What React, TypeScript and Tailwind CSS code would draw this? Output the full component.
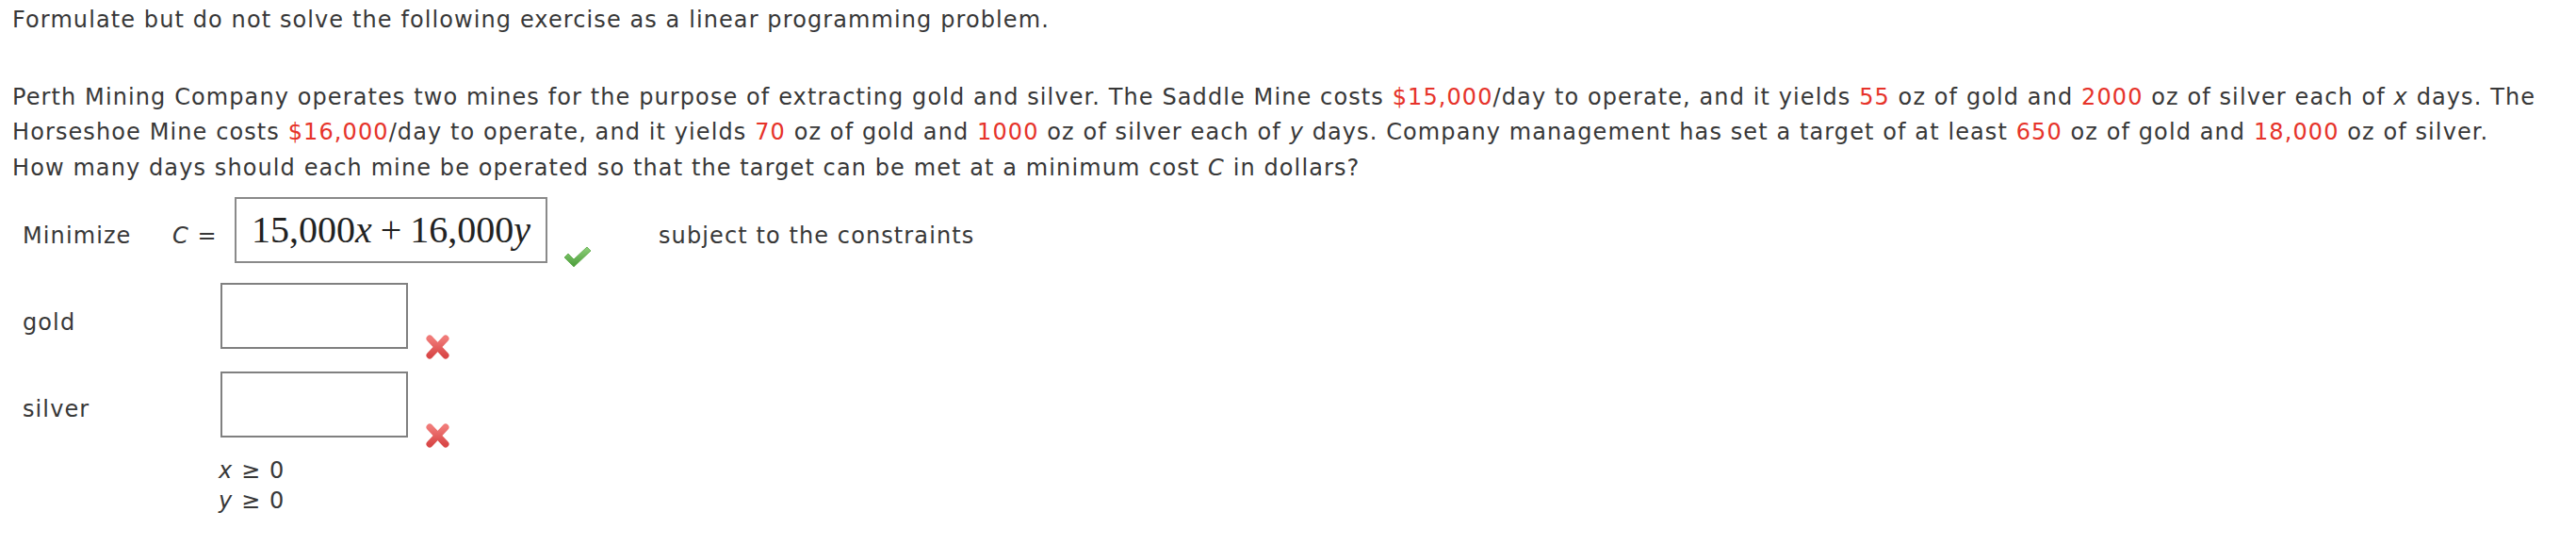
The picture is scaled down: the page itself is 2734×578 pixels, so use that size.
import React from 'react'

const Red = ({ children }: { children: React.ReactNode }) => <span className="text-[#e6332a]">{children}</span>

function CheckMark() {
  return (
    <svg width="30" height="23" viewBox="0 0 30 23">
      <defs>
        <linearGradient id="chk" x1="0" y1="0" x2="0" y2="1">
          <stop offset="0" stopColor="#8fd07a" />
          <stop offset="1" stopColor="#4a9c3a" />
        </linearGradient>
      </defs>
      <path d="M1 12 L5 8 L11 14 L25 1 L29 5 L11 22 Z" fill="url(#chk)" stroke="#5aa845" strokeWidth="0.8" strokeLinejoin="round" />
    </svg>
  )
}

function CrossMark() {
  return (
    <svg width="27" height="28" viewBox="0 0 27 28">
      <defs>
        <linearGradient id="crs" x1="0" y1="0" x2="0" y2="1">
          <stop offset="0" stopColor="#f07a78" />
          <stop offset="1" stopColor="#d94848" />
        </linearGradient>
      </defs>
      <g stroke="url(#crs)" strokeWidth="7" strokeLinecap="round">
        <line x1="5" y1="5" x2="22" y2="23" />
        <line x1="22" y1="5" x2="5" y2="23" />
      </g>
    </svg>
  )
}

function EmptyBox() {
  return <div className="h-[70px] w-[199px] border-2 border-[#808080] bg-white" />
}

export default function App() {
  return (
    <div className="min-h-[578px] bg-white pl-[13px] pr-[20px] pt-[3px] font-['DejaVu_Sans',sans-serif] text-[24px] leading-[37.5px] tracking-[1.1px] text-[#383838]">
      <p>Formulate but do not solve the following exercise as a linear programming problem.</p>

      <p className="mt-[44px] whitespace-nowrap">
        Perth Mining Company operates two mines for the purpose of extracting gold and silver. The Saddle Mine costs{' '}
        <Red>$15,000</Red>/day to operate, and it yields <Red>55</Red> oz of gold and <Red>2000</Red> oz of silver each of{' '}
        <i>x</i> days. The
        <br />
        Horseshoe Mine costs <Red>$16,000</Red>/day to operate, and it yields <Red>70</Red> oz of gold and{' '}
        <Red>1000</Red> oz of silver each of <i>y</i> days. Company management has set a target of at least <Red>650</Red> oz
        of gold and <Red>18,000</Red> oz of silver.
        <br />
        How many days should each mine be operated so that the target can be met at a minimum cost <i>C</i> in dollars?
      </p>

      <div className="mt-[12px] pl-[11px]">
        <div className="flex items-start">
          <span className="mt-[23px] w-[159px]">Minimize</span>
          <span className="mt-[23px] w-[66px]">
            <i>C</i> =
          </span>
          <div className="flex items-end">
            <div className="flex h-[70px] w-[332px] items-center border-2 border-[#8a8a8a] pl-[16px] font-['Liberation_Serif',serif] text-[40px] tracking-normal text-[#222]">
              15,000<i>x</i>
              <span className="mx-[9px]">+</span>
              16,000<i>y</i>
            </div>
            <div className="mb-[-5px] ml-[17px]">
              <CheckMark />
            </div>
          </div>
          <span className="ml-[71px] mt-[23px]">subject to the constraints</span>
        </div>

        <div className="mt-[21px] flex items-start">
          <span className="mt-[24px] w-[210px]">gold</span>
          <div className="flex items-end">
            <EmptyBox />
            <div className="mb-[-12px] ml-[18px]">
              <CrossMark />
            </div>
          </div>
        </div>

        <div className="mt-[24px] flex items-start">
          <span className="mt-[22px] w-[210px]">silver</span>
          <div className="flex items-end">
            <EmptyBox />
            <div className="mb-[-12px] ml-[18px]">
              <CrossMark />
            </div>
          </div>
        </div>

        <div className="mt-[19px] pl-[208px] leading-[32px]">
          <div>
            <i>x</i> ≥ 0
          </div>
          <div>
            <i>y</i> ≥ 0
          </div>
        </div>
      </div>
    </div>
  )
}
